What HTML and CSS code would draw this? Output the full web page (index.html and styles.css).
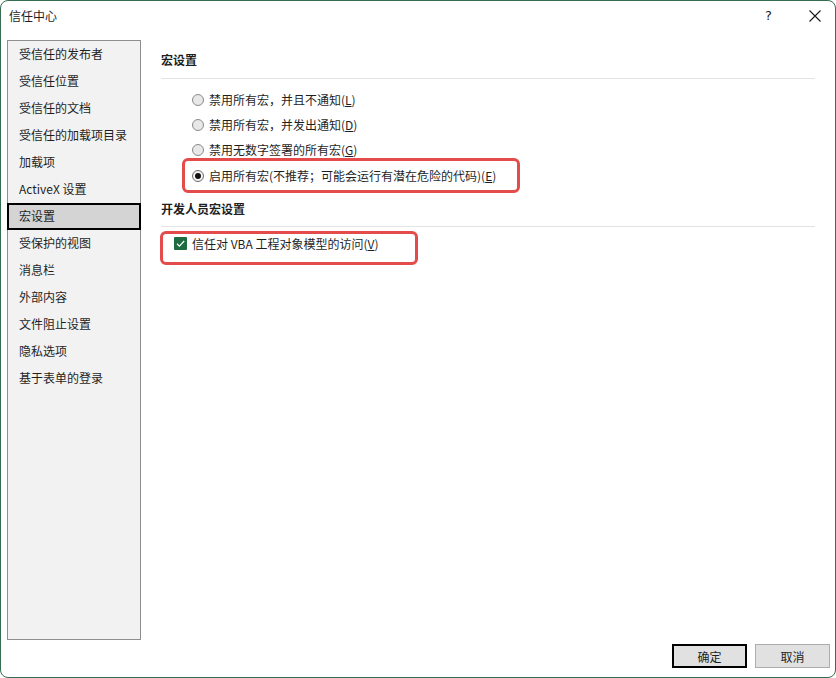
FILE: index.html
```html
<!DOCTYPE html>
<html lang="zh-CN">
<head>
<meta charset="utf-8">
<title>信任中心</title>
<link rel="stylesheet" href="styles.css">
</head>
<body>
<div class="window">
  <div class="titlebar">
    <span class="title">信任中心</span>
    <div class="controls">
      <span class="help">?</span>
      <svg class="close" width="12" height="12" viewBox="0 0 12 12"><path d="M0.5 0.5 L11.5 11.5 M11.5 0.5 L0.5 11.5" stroke="#1a1a1a" stroke-width="1.1" fill="none"/></svg>
    </div>
  </div>
  <div class="body">
    <ul class="sidebar">
      <li class="nav">受信任的发布者</li>
      <li class="nav">受信任位置</li>
      <li class="nav">受信任的文档</li>
      <li class="nav">受信任的加载项目录</li>
      <li class="nav">加载项</li>
      <li class="nav">ActiveX 设置</li>
      <li class="nav selected">宏设置</li>
      <li class="nav">受保护的视图</li>
      <li class="nav">消息栏</li>
      <li class="nav">外部内容</li>
      <li class="nav">文件阻止设置</li>
      <li class="nav">隐私选项</li>
      <li class="nav">基于表单的登录</li>
    </ul>
    <div class="main">
      <div class="section-head">宏设置</div>
      <div class="options">
        <div class="row"><span class="radio"></span><span>禁用所有宏，并且不通知(<u>L</u>)</span></div>
        <div class="row"><span class="radio"></span><span>禁用所有宏，并发出通知(<u>D</u>)</span></div>
        <div class="row"><span class="radio"></span><span>禁用无数字签署的所有宏(<u>G</u>)</span></div>
        <div class="row row-last"><span class="radio checked"></span><span>启用所有宏(不推荐；可能会运行有潜在危险的代码)(<u>E</u>)</span></div>
      </div>
      <div class="section-head second">开发人员宏设置</div>
      <div class="checks">
        <div class="row"><span class="checkbox"><svg width="13" height="13" viewBox="0 0 13 13"><path d="M3 6.8 L5.4 9.1 L10.2 4" stroke="#fff" stroke-width="1.2" fill="none"/></svg></span><span>信任对 VBA 工程对象模型的访问(<u>V</u>)</span></div>
      </div>
      <div class="mark mark-radio"></div>
      <div class="mark mark-check"></div>
    </div>
  </div>
  <div class="footer">
    <button class="btn default">确定</button>
    <button class="btn">取消</button>
  </div>
</div>
</body>
</html>
```
FILE: styles.css
```css
* { box-sizing: border-box; }
html, body { margin: 0; padding: 0; background: #ffffff; }
body {
  font-family: "Noto Sans CJK SC", "Microsoft YaHei", sans-serif;
  font-size: 12px;
  color: #1f1f1f;
}
.window {
  width: 836px;
  height: 678px;
  border: 1px solid #356c52;
  border-radius: 8px;
  background: #ffffff;
  display: flex;
  flex-direction: column;
  overflow: hidden;
}
.titlebar {
  height: 39px;
  display: flex;
  justify-content: space-between;
  align-items: flex-start;
  padding: 5px 14px 0 8px;
  flex-shrink: 0;
}
.title { line-height: 20px; font-size: 12px; }
.controls { display: flex; align-items: center; gap: 37px; height: 20px; }
.help { font-family: "DejaVu Sans", sans-serif; font-size: 13px; line-height: 20px; color: #1a1a1a; }
.close { display: block; }
.body {
  display: flex;
  height: 600px;
  padding: 0 6px;
  flex-shrink: 0;
}
.sidebar {
  list-style: none;
  margin: 0;
  padding: 0;
  width: 134px;
  height: 600px;
  border: 1px solid #8f8f8f;
  background: #f2f2f2;
  flex-shrink: 0;
}
.nav {
  height: 27px;
  line-height: 25px;
  padding: 0 0 2px 11px;
  white-space: nowrap;
}
.nav.selected {
  margin: 0 -1px;
  padding: 0 0 2px 10px;
  background: #d4d4d4;
  border: 2px solid #000;
  line-height: 21px;
}
.main {
  position: relative;
  flex: 1;
  padding: 0 14px 0 20px;
}
.section-head {
  padding: 10px 0 8px;
  line-height: 20px;
  font-weight: 700;
  border-bottom: 1px solid #e3e3e3;
}
.section-head.second { margin-top: 1px; padding-bottom: 7px; }
.options { padding: 8px 0 0 31px; }
.checks { padding: 4px 0 0 13px; }
.row {
  height: 25px;
  display: flex;
  align-items: center;
  white-space: nowrap;
}
.row-last { margin-top: 1px; }
.radio {
  width: 12px;
  height: 12px;
  border-radius: 50%;
  border: 1px solid #8a8a8a;
  background: #e8e8e8;
  margin-right: 5px;
  flex-shrink: 0;
  display: flex;
  align-items: center;
  justify-content: center;
}
.radio.checked { background: #f4f4f4; border-color: #6a6a6a; }
.radio.checked::after {
  content: "";
  width: 6px;
  height: 6px;
  border-radius: 50%;
  background: #111;
}
.checkbox {
  width: 13px;
  height: 13px;
  background: #1e6c41;
  border-radius: 1px;
  margin-right: 5px;
  flex-shrink: 0;
  display: flex;
}
.checkbox svg { display: block; }
u { text-decoration: underline; text-underline-offset: 1px; }
.mark {
  position: absolute;
  border: 3px solid #e44b4b;
  border-radius: 6px;
  pointer-events: none;
}
.mark-radio { left: 41px; top: 118px; width: 338px; height: 35px; }
.mark-check { left: 19px; top: 191px; width: 258px; height: 34px; }
.footer {
  display: flex;
  justify-content: flex-end;
  gap: 8px;
  padding: 4px 5px 0 0;
}
.btn {
  width: 75px;
  height: 24px;
  font-family: inherit;
  font-size: 12px;
  color: #1f1f1f;
  background: #e1e1e1;
  border: 1px solid #adadad;
  padding: 0;
  margin: 0;
}
.btn.default { border: 2px solid #000; }
```
